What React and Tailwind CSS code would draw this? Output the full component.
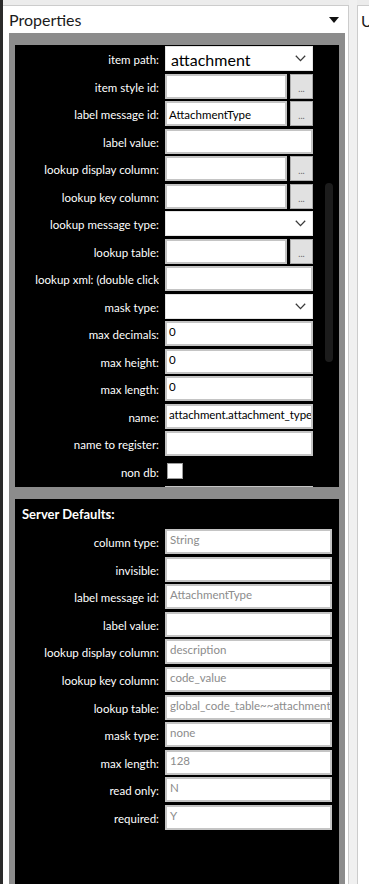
import { useState } from "react";

// rows of the scrolled property grid
const itemRows = [
    { label: "item path:", type: "select", value: "attachment", big: true },
    { label: "item style id:", type: "button" },
    { label: "label message id:", type: "button", value: "AttachmentType", center: true },
    { label: "label value:", type: "text" },
    { label: "lookup display column:", type: "button" },
    { label: "lookup key column:", type: "button" },
    { label: "lookup message type:", type: "select" },
    { label: "lookup table:", type: "button" },
    { label: "lookup xml: (double click", type: "text" },
    { label: "mask type:", type: "select" },
    { label: "max decimals:", type: "text", value: "0" },
    { label: "max height:", type: "text", value: "0" },
    { label: "max length:", type: "text", value: "0" },
    { label: "name:", type: "text", value: "attachment.attachment_type" },
    { label: "name to register:", type: "text" },
    { label: "non db:", type: "check" },
    { label: "nullable:", type: "text" },
];

const serverRows = [
    { label: "column type:", value: "String" },
    { label: "invisible:", value: "" },
    { label: "label message id:", value: "AttachmentType" },
    { label: "label value:", value: "" },
    { label: "lookup display column:", value: "description" },
    { label: "lookup key column:", value: "code_value" },
    { label: "lookup table:", value: "global_code_table~~attachment_type" },
    { label: "mask type:", value: "none" },
    { label: "max length:", value: "128" },
    { label: "read only:", value: "N" },
    { label: "required:", value: "Y" },
];

function Chevron() {
    return (
        <svg width="11" height="7" viewBox="0 0 11 7" className="shrink-0">
            <polyline points="0.8,0.8 5.5,5.6 10.2,0.8" fill="none" stroke="#3a3a3a" strokeWidth="1.3" />
        </svg>
    );
}

function Row({ label, children }) {
    return (
        <div className="flex h-[25px] shrink-0 items-stretch">
            <div className="w-[144px] shrink-0 self-center overflow-hidden whitespace-nowrap pt-[3px] text-right text-[11.5px] leading-[14px] text-white">
                {label}
            </div>
            <div className="ml-[6px] flex">{children}</div>
        </div>
    );
}

function Field({ row }) {
    if (row.type === "select") {
        return (
            <div className="flex w-[148px] items-center justify-between border border-[#e4e4e4] bg-white pl-[5px] pr-[6px]">
                <span className={row.big ? "pt-[3px] text-[16px] leading-[18px] text-black" : "text-[11.5px] text-black"}>
                    {row.value}
                </span>
                <Chevron />
            </div>
        );
    }
    if (row.type === "check") {
        return <div className="ml-[2px] h-[16px] w-[16px] self-center border border-[#9c9c9c] bg-white" />;
    }
    if (row.type === "button") {
        return (
            <>
                <div
                    className={
                        "w-[122px] overflow-hidden whitespace-nowrap border-2 border-[#c4c4c4] bg-white px-[2px] text-[11.5px] leading-[14px] text-black " +
                        (row.center ? "flex items-center pt-[2px]" : "pt-[2px]")
                    }
                >
                    {row.value}
                </div>
                <div className="ml-[3px] flex w-[23px] items-end justify-center border border-[#adadad] bg-[#e1e1e1] pb-[5px] text-[9px] leading-none text-[#666666]">
                    ...
                </div>
            </>
        );
    }
    return (
        <div className="w-[148px] overflow-hidden whitespace-nowrap border-2 border-[#c4c4c4] bg-white pl-[2px] pt-[2px] text-[11.5px] leading-[14px] tracking-[-0.1px] text-black">
            {row.value}
        </div>
    );
}

export default function App() {
    const [open] = useState(true);

    return (
        <div className="flex h-[884px] w-[369px] overflow-hidden bg-[#f0f0f0] font-['Lato','Liberation_Sans',sans-serif]">
            {/* dark edge of the window on the left */}
            <div className="w-[3px] shrink-0 bg-[#2b2b2b]" />

            {/* Properties panel */}
            <div className="flex w-[346px] shrink-0 flex-col">
                <div className="h-[5px] shrink-0 bg-[#ececec]" />
                <div className="flex flex-1 flex-col border-r border-t border-[#cccccc] bg-white pl-[6px] pr-[3px]">
                    <div className="flex h-[27px] shrink-0 items-center justify-between pr-[6px]">
                        <span className="pt-[1px] text-[16px] leading-[20px] text-[#1b1b1b]">Properties</span>
                        <svg width="10" height="6" viewBox="0 0 10 6">
                            <polygon points="0,0 10,0 5,6" fill="#111111" />
                        </svg>
                    </div>

                    {open && (
                        <div className="flex flex-1 flex-col gap-[12px] bg-[#8c8c8c] px-[6px] pt-[12px]">
                            {/* item properties, scrolled */}
                            <div className="relative h-[442px] shrink-0 overflow-hidden bg-black">
                                <div className="flex flex-col gap-[2.5px] pt-[1px]">
                                    {itemRows.map((row) => (
                                        <Row key={row.label} label={row.label}>
                                            <Field row={row} />
                                        </Row>
                                    ))}
                                </div>
                                <div className="absolute left-[310px] top-[138px] h-[179px] w-[8px] rounded-full bg-[#1c1c1c]" />
                            </div>

                            {/* server defaults, read only */}
                            <div className="flex flex-1 flex-col bg-black pt-[7px]">
                                <div className="h-[17px] pl-[7px] text-[13px] font-bold leading-[17px] text-white">
                                    Server Defaults:
                                </div>
                                <div className="mt-[6px] flex flex-col gap-[2.6px]">
                                    {serverRows.map((row) => (
                                        <Row key={row.label} label={row.label}>
                                            <div className="w-[167px] overflow-hidden whitespace-nowrap border-2 border-[#c4c4c4] bg-white px-[3px] pt-[2px] text-[11.5px] leading-[14px] text-[#8c8c8c]">
                                                {row.value}
                                            </div>
                                        </Row>
                                    ))}
                                </div>
                            </div>
                        </div>
                    )}
                </div>
            </div>

            {/* gap between docked panels */}
            <div className="w-[8px] shrink-0 bg-[#f0f0f0]" />

            {/* next panel, cut off at the window edge */}
            <div className="flex flex-1 flex-col">
                <div className="h-[5px] shrink-0 bg-[#ececec]" />
                <div className="flex-1 border-l border-t border-[#cccccc] bg-white pl-[3px]">
                    <div className="pt-[5px] text-[16px] leading-[20px] text-[#1b1b1b]">U</div>
                </div>
            </div>
        </div>
    );
}
